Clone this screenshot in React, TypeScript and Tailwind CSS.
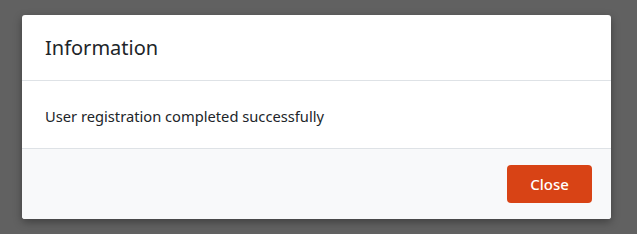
import React from "react";

export default function App() {
  return (
    <div
      className="w-[637px] h-[234px] bg-[#616161] pt-[15px] pl-[22px]"
      style={{ fontFamily: '"Noto Sans", "Open Sans", sans-serif' }}
    >
      <div className="w-[589px] h-[204px] bg-white rounded-[3px] shadow-[0_3px_8px_rgba(0,0,0,0.35)] flex flex-col overflow-hidden">
        <div className="h-[66px] shrink-0 border-b border-[#dee2e6] flex items-center px-[23px]">
          <h2 className="text-[20px] text-[#212529] leading-none">Information</h2>
        </div>
        <div className="h-[68px] shrink-0 border-b border-[#dee2e6] flex items-center px-[23px] pt-[3px]">
          <p className="text-[14.7px] text-[#212529]">User registration completed successfully</p>
        </div>
        <div className="flex-1 bg-[#f8f9fa] flex items-center justify-end pr-[19px]">
          <button className="w-[85px] h-[38px] bg-[#d84315] text-white text-[15px] font-medium rounded-[4px]">
            Close
          </button>
        </div>
      </div>
    </div>
  );
}
